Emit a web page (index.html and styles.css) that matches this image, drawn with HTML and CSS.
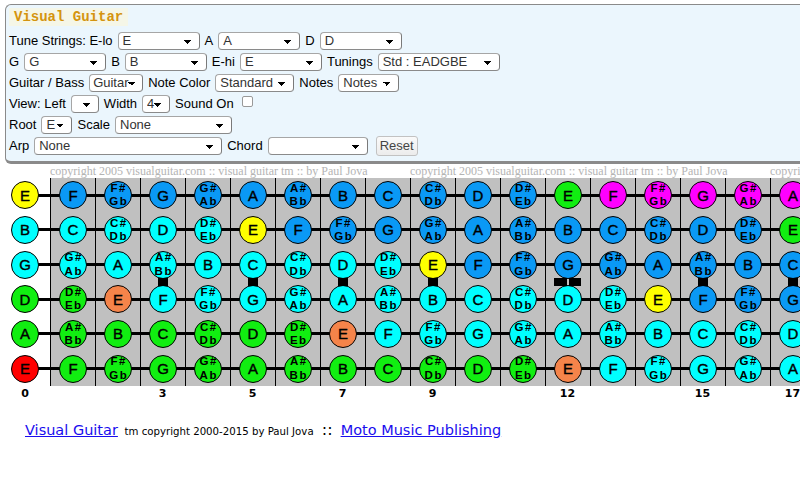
FILE: index.html
```html
<!DOCTYPE html>
<html lang="en">
<head>
    <meta charset="UTF-8">
    <meta name="viewport" content="width=device-width, initial-scale=1.0">
    <title>Visual Guitar</title>
    <link rel="stylesheet" href="styles.css">
</head>
<body>
    <div class="panel">
        <div class="title">Visual Guitar</div>
        <div class="row">
            <span>Tune Strings: E-lo</span>
            <select class="sel-string"><option>E</option></select>
            <span>A</span>
            <select class="sel-string"><option>A</option></select>
            <span>D</span>
            <select class="sel-string"><option>D</option></select>
        </div>
        <div class="row">
            <span>G</span>
            <select class="sel-string"><option>G</option></select>
            <span>B</span>
            <select class="sel-string"><option>B</option></select>
            <span>E-hi</span>
            <select class="sel-string"><option>E</option></select>
            <span>Tunings</span>
            <select class="sel-tunings"><option>Std : EADGBE</option></select>
        </div>
        <div class="row">
            <span>Guitar / Bass</span>
            <select class="sel-instrument"><option>Guitar</option></select>
            <span>Note Color</span>
            <select class="sel-color"><option>Standard</option></select>
            <span>Notes</span>
            <select class="sel-notes"><option>Notes</option></select>
        </div>
        <div class="row">
            <span>View: Left</span>
            <select class="sel-small"><option></option></select>
            <span>Width</span>
            <select class="sel-small"><option>4</option></select>
            <span>Sound On</span>
            <input type="checkbox" class="sound">
        </div>
        <div class="row">
            <span>Root</span>
            <select class="sel-root"><option>E</option></select>
            <span>Scale</span>
            <select class="sel-scale"><option>None</option></select>
        </div>
        <div class="row">
            <span>Arp</span>
            <select class="sel-arp"><option>None</option></select>
            <span>Chord</span>
            <select class="sel-chord"><option></option></select>
            <button class="reset">Reset</button>
        </div>
    </div>

    <div class="fretboard">
        <div class="copyline">
            <span>copyright 2005 visualguitar.com :: visual guitar tm :: by Paul Jova</span><span>copyright 2005 visualguitar.com :: visual guitar tm :: by Paul Jova</span><span>copyright 2005 visualguitar.com :: visual guitar tm :: by Paul Jova</span>
        </div>
        <div class="board" id="board"></div>
        <div class="fret-numbers" id="fret-numbers"></div>
    </div>

    <div class="footer">
        <a href="#">Visual Guitar</a> <span class="small">tm copyright 2000-2015 by Paul Jova</span> <span class="sep">::</span> <a href="#">Moto Music Publishing</a>
    </div>

    <script src="script.js"></script>
</body>
</html>
```

FILE: styles.css
```css
html, body {
    margin: 0;
    padding: 0;
    background: #fff;
    overflow: hidden;
}
body {
    width: 880px;
    font-family: "Liberation Sans", Arial, sans-serif;
    font-size: 13px;
    color: #000;
}
.panel {
    margin: 4px 0 0 5px;
    padding: 3px 0 5px 3px;
    background: #ebf6fd;
    border: 1px solid #8a8a8a;
    border-bottom-width: 3px;
    border-right: none;
    border-radius: 6px 0 0 6px;
}
.title {
    width: fit-content;
    padding: 0 5px;
    margin-bottom: 4px;
    font: bold 14px/18px "Liberation Mono", monospace;
    color: #d4940f;
    background: #f5f6e7;
}
.row {
    display: flex;
    align-items: center;
    gap: 5px;
    height: 21px;
    white-space: nowrap;
}
select {
    -webkit-appearance: none;
    appearance: none;
    box-sizing: border-box;
    height: 18px;
    margin: 0;
    padding: 0 12px 0 4px;
    font: 13px "Liberation Sans", Arial, sans-serif;
    color: #333;
    border: 1px solid #a6a6a6;
    border-right-color: #7a7a7a;
    border-bottom-color: #8a8a8a;
    border-radius: 4px;
    background-color: #fff;
    background-image: linear-gradient(45deg, transparent 50%, #000 50%), linear-gradient(135deg, #000 50%, transparent 50%);
    background-size: 4px 4px, 4px 4px;
    background-position: calc(100% - 11px) 7px, calc(100% - 7px) 7px;
    background-repeat: no-repeat;
}
.sel-string { width: 82px; }
.sel-tunings { width: 122px; }
.sel-instrument {
    width: 54px;
    padding: 0 8px 0 3px;
    background-position: calc(100% - 10px) 7px, calc(100% - 6px) 7px;
}
.sel-color { width: 79px; }
.sel-notes { width: 61px; }
.sel-small { width: 28px; }
.sel-root { width: 31px; }
.sel-scale { width: 117px; }
.sel-arp { width: 188px; }
.sel-chord { width: 100px; }
.sound {
    -webkit-appearance: none;
    appearance: none;
    width: 11px;
    height: 11px;
    margin: 0 0 5px 3px;
    background: #fff;
    border: 1px solid #999;
    border-radius: 2px;
}
.reset {
    height: 20px;
    margin-left: 3px;
    padding: 0 3px;
    font: 13px "Liberation Sans", Arial, sans-serif;
    color: #444;
    background: linear-gradient(#fafafa, #ececec);
    border: 1px solid #c2c2c2;
    border-radius: 3px;
}

/* fretboard */
.copyline {
    height: 14px;
    padding-left: 50px;
    font: 12px/14px "Liberation Serif", serif;
    color: #b4b4b4;
    white-space: nowrap;
}
.copyline span {
    display: inline-block;
    width: 360px;
}
.board,
.fret-numbers {
    display: grid;
    grid-template-columns: 50px repeat(17, 45px);
}
.board {
    grid-auto-rows: 34.67px;
}
.cell {
    box-sizing: border-box;
    display: flex;
    align-items: center;
    justify-content: center;
    border-left: 1px solid #000;
    background: linear-gradient(#000, #000) center / 100% 3px no-repeat, #c0c0c0;
}
.cell.open {
    border-left: none;
    background: linear-gradient(#000, #000) right center / 50% 3px no-repeat, #fff;
}
.dot,
.dot2 {
    position: relative;
}
.dot::after,
.dot2::after {
    content: "";
    position: absolute;
    left: 50%;
    bottom: -4px;
    width: 10px;
    height: 8px;
    margin-left: -5px;
    background: #000;
    z-index: 2;
}
.dot2::after {
    width: 27px;
    margin-left: -14px;
    background: linear-gradient(to right, #000 13px, transparent 13px, transparent 15px, #000 15px);
}
.note {
    box-sizing: border-box;
    width: 28px;
    height: 28px;
    display: flex;
    flex-direction: column;
    align-items: center;
    justify-content: center;
    border: 1px solid #000;
    border-radius: 50%;
    font: 15px/1 "Liberation Sans", Arial, sans-serif;
    -webkit-text-stroke: 0.4px #000;
    color: #000;
}
.note.sharp {
    font: bold 11.5px/13.2px "Liberation Sans", Arial, sans-serif;
    letter-spacing: 1.5px;
    -webkit-text-stroke: 0;
}
.note.sharp span {
    display: block;
    margin-right: -1.5px;
}
.c-y { background: #ffff00; }
.c-b { background: #0a99f5; }
.c-c { background: #00ffff; }
.c-g { background: #11ee11; }
.c-m { background: #ff00ff; }
.c-o { background: #f5844a; }
.c-r { background: #ff0000; }
.fret-numbers div {
    height: 16px;
    text-align: center;
    font: bold 11px/16px "DejaVu Sans", sans-serif;
}

.footer {
    padding: 18px 0 0 25px;
    font: 14.5px/20px "DejaVu Sans", Verdana, sans-serif;
}
.footer a {
    color: #1a0dee;
}
.footer .small {
    margin-left: 2px;
    font-size: 10.2px;
}
.footer .sep {
    margin: 0 3.5px;
    font-size: 16px;
}
```

FILE: script.js
```js
const names = ["C", "C#/Db", "D", "D#/Eb", "E", "F", "F#/Gb", "G", "G#/Ab", "A", "A#/Bb", "B"];

// open note index + colour code per fret (0..17)
const strings = [
    { open: 4,  colors: "ybbbbbbbbbbbgmmmmm" },
    { open: 11, colors: "cccccybbbbbbbbbbbg" },
    { open: 7,  colors: "cccccccccybbbbbbbb" },
    { open: 2,  colors: "ggocccccccccccybbb" },
    { open: 9,  colors: "gggggggocccccccccc" },
    { open: 4,  colors: "rgggggggggggoccccc" }
];
const dots = [3, 5, 7, 9, 15, 17];
const numbers = [0, 3, 5, 7, 9, 12, 15, 17];

const board = document.getElementById("board");
strings.forEach((s, row) => {
    for (let f = 0; f < 18; f++) {
        const cell = document.createElement("div");
        cell.className = f === 0 ? "cell open" : "cell";
        if (row === 2 && dots.includes(f)) cell.classList.add("dot");
        if (row === 2 && f === 12) cell.classList.add("dot2");

        const name = names[(s.open + f) % 12];
        const note = document.createElement("div");
        note.className = "note c-" + s.colors[f];
        if (name.includes("/")) {
            note.classList.add("sharp");
            name.split("/").forEach(part => {
                const span = document.createElement("span");
                span.textContent = part;
                note.appendChild(span);
            });
        } else {
            note.textContent = name;
        }
        cell.appendChild(note);
        board.appendChild(cell);
    }
});

const fretNumbers = document.getElementById("fret-numbers");
for (let f = 0; f < 18; f++) {
    const div = document.createElement("div");
    div.textContent = numbers.includes(f) ? f : "";
    fretNumbers.appendChild(div);
}
```
